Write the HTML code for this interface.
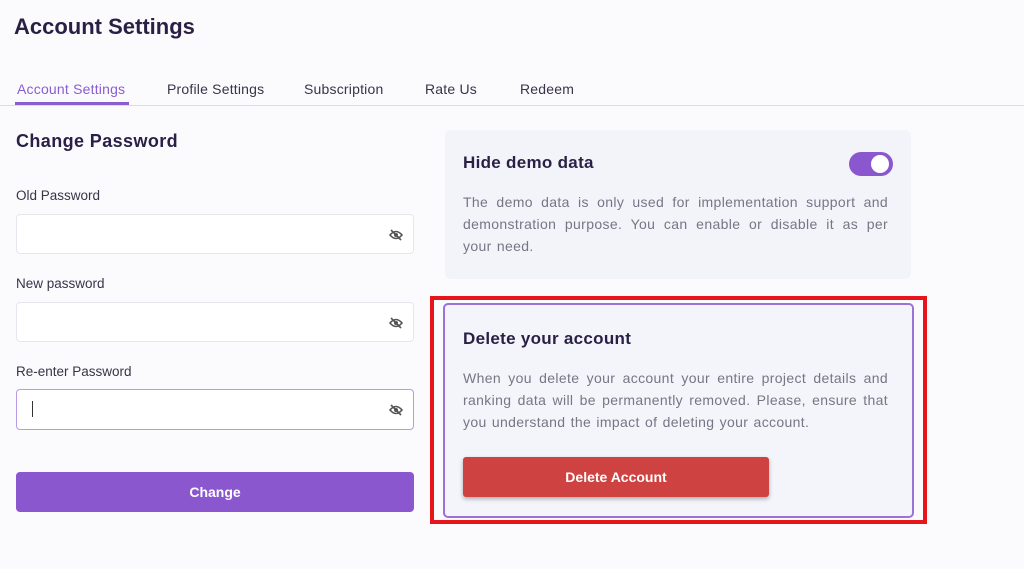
<!DOCTYPE html><html><head><style>
*{margin:0;padding:0;box-sizing:border-box}
body{width:1024px;height:569px;background:#fbfbfe;font-family:"Liberation Sans",sans-serif;position:relative;overflow:hidden;color:#2a1f45}
.a{position:absolute}
h1{position:absolute;left:14px;top:14px;font-size:22px;font-weight:bold;color:#2a1f45}
.tab{position:absolute;top:81px;font-size:14px;color:#3a3348;letter-spacing:0.2px}
.lbl{position:absolute;left:16px;font-size:13.5px;color:#3a3348}
.inp{position:absolute;left:16px;width:398px;height:40px;background:#fff;border:1px solid #e6e6ee;border-radius:4px}
.eye{position:absolute;right:10px;top:13px}
.p{font-size:14px;letter-spacing:0.35px;word-spacing:1px;color:#767685;line-height:22px;text-align:justify}
</style></head><body>
<h1>Account Settings</h1>
<div class="tab" style="left:17px;color:#8a5ed0">Account Settings</div>
<div class="a" style="left:15px;top:102px;width:114px;height:3px;background:#8a5ed0"></div>
<div class="tab" style="left:167px">Profile Settings</div>
<div class="tab" style="left:304px">Subscription</div>
<div class="tab" style="left:425px">Rate Us</div>
<div class="tab" style="left:520px">Redeem</div>
<div class="a" style="left:0;top:105px;width:1024px;height:1px;background:#dcdce4"></div>
<div class="a" style="left:16px;top:131px;font-size:18px;font-weight:bold;letter-spacing:0.4px;color:#2a1f45">Change Password</div>
<div class="lbl" style="top:188px">Old Password</div>
<div class="inp" style="top:214px"><svg class="eye" width="14" height="14" viewBox="0 0 14 14"><path d="M1 7Q7 0 13 7Q7 14 1 7Z" fill="none" stroke="#555" stroke-width="1.6"/><circle cx="7" cy="7" r="2" fill="#555"/><path d="M2 2L12 12" stroke="#555" stroke-width="1.6"/></svg></div>
<div class="lbl" style="top:276px">New password</div>
<div class="inp" style="top:302px"><svg class="eye" width="14" height="14" viewBox="0 0 14 14"><path d="M1 7Q7 0 13 7Q7 14 1 7Z" fill="none" stroke="#555" stroke-width="1.6"/><circle cx="7" cy="7" r="2" fill="#555"/><path d="M2 2L12 12" stroke="#555" stroke-width="1.6"/></svg></div>
<div class="lbl" style="top:364px">Re-enter Password</div>
<div class="inp" style="top:389px;height:41px;border:1.5px solid #b79ae6"><div class="a" style="left:15px;top:11px;width:1px;height:16px;background:#333"></div><svg class="eye" width="14" height="14" viewBox="0 0 14 14"><path d="M1 7Q7 0 13 7Q7 14 1 7Z" fill="none" stroke="#555" stroke-width="1.6"/><circle cx="7" cy="7" r="2" fill="#555"/><path d="M2 2L12 12" stroke="#555" stroke-width="1.6"/></svg></div>
<div class="a" style="left:16px;top:472px;width:398px;height:40px;background:#8a57cf;border-radius:4px;color:#fff;font-size:14px;font-weight:bold;text-align:center;line-height:40px">Change</div>
<div class="a" style="left:445px;top:130px;width:466px;height:149px;background:#f2f4fa;border-radius:6px">
<div class="a" style="left:18px;top:23px;font-size:17px;font-weight:bold;letter-spacing:0.3px">Hide demo data</div>
<div class="a" style="left:404px;top:22px;width:44px;height:24px;background:#8a57cf;border-radius:12px"><div class="a" style="right:4px;top:3px;width:18px;height:18px;background:#fff;border-radius:50%"></div></div>
<div class="a p" style="left:18px;top:61px;width:425px">The demo data is only used for implementation support and demonstration purpose. You can enable or disable it as per your need.</div>
</div>
<div class="a" style="left:430px;top:296px;width:497px;height:228px;border:4px solid #e8141c"></div>
<div class="a" style="left:443px;top:303px;width:471px;height:215px;background:#f3f5fb;border:2px solid #9a72d8;border-radius:5px">
<div class="a" style="left:18px;top:24px;font-size:17px;font-weight:bold;letter-spacing:0.3px">Delete your account</div>
<div class="a p" style="left:18px;top:62px;width:425px">When you delete your account your entire project details and ranking data will be permanently removed. Please, ensure that you understand the impact of deleting your account.</div>
<div class="a" style="left:18px;top:152px;width:306px;height:40px;background:#cf4242;border-radius:3px;box-shadow:0 2px 4px rgba(0,0,0,.3);color:#fff;font-size:14px;font-weight:bold;text-align:center;line-height:40px">Delete Account</div>
</div>
</body></html>
